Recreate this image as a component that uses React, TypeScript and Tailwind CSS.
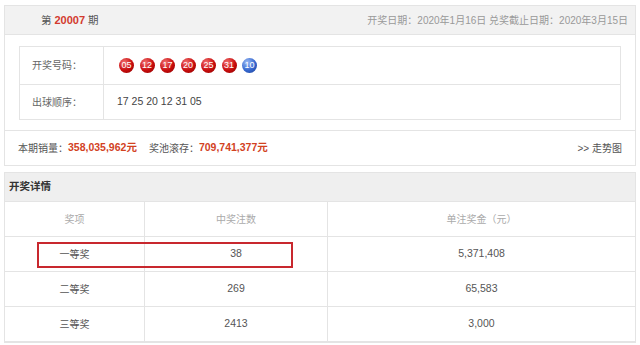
import React from 'react'

const redBalls = ['05', '12', '17', '20', '25', '31']
const blueBalls = ['10']

const prizes = [
  { name: '一等奖', count: '38', amount: '5,371,408' },
  { name: '二等奖', count: '269', amount: '65,583' },
  { name: '三等奖', count: '2413', amount: '3,000' },
]

const Ball = ({ num, blue }: { num: string; blue?: boolean }) => (
  <span
    className={`flex h-[15px] w-[15px] items-center justify-center rounded-full text-[9px] leading-none text-white ${
      blue
        ? 'bg-[radial-gradient(circle_at_35%_30%,#9dbcf5,#3567cf_55%,#1d3f92)]'
        : 'bg-[radial-gradient(circle_at_35%_30%,#f27070,#c80c0c_55%,#860000)]'
    }`}
  >
    {num}
  </span>
)

export default function App() {
  return (
    <div className="h-[345px] w-[640px] overflow-hidden bg-white px-[4px] pt-[5px] font-['Liberation_Sans','Noto_Sans_CJK_SC',sans-serif] text-[10px] text-[#555]">
      {/* Draw info */}
      <div className="border border-[#e4e4e4]">
        <div className="flex h-[29px] items-center justify-between border-b border-[#e4e4e4] bg-[#f2f2f2] pl-[36px] pr-[7px]">
          <div className="text-[10.5px] text-[#555]">
            第 <span className="text-[11px] font-bold text-[#d23a2e]">20007</span> 期
          </div>
          <div className="text-[#999]">开奖日期：2020年1月16日 兑奖截止日期：2020年3月15日</div>
        </div>

        <div className="px-[14px] pb-[10px] pt-[11px]">
          <div className="border border-[#e4e4e4]">
            <div className="flex h-[38px] border-b border-[#e4e4e4]">
              <div className="flex w-[84px] items-center border-r border-[#e4e4e4] pl-[12px] text-[#666]">开奖号码：</div>
              <div className="flex items-center gap-[5.5px] pl-[15px]">
                {redBalls.map((n) => (
                  <Ball key={n} num={n} />
                ))}
                {blueBalls.map((n) => (
                  <Ball key={n} num={n} blue />
                ))}
              </div>
            </div>
            <div className="flex h-[34px]">
              <div className="flex w-[84px] items-center border-r border-[#e4e4e4] pl-[12px] text-[#666]">出球顺序：</div>
              <div className="flex items-center pl-[13px] text-[10.5px] text-[#444]">17 25 20 12 31 05</div>
            </div>
          </div>
        </div>

        <div className="flex h-[35px] items-center justify-between border-t border-[#e4e4e4] pl-[13px] pr-[13px]">
          <div className="flex items-center">
            <span>本期销量：</span>
            <span className="text-[10.5px] font-bold text-[#d2421f]">358,035,962元</span>
            <span className="ml-[12px]">奖池滚存：</span>
            <span className="text-[10.5px] font-bold text-[#d2421f]">709,741,377元</span>
          </div>
          <div className="text-[#555]">&gt;&gt; 走势图</div>
        </div>
      </div>

      {/* Prize details */}
      <div className="mt-[6px] border border-[#e4e4e4]">
        <div className="flex h-[29px] items-center border-b border-[#e4e4e4] bg-[#efefef] pl-[4px] text-[10.5px] font-bold text-[#333]">
          开奖详情
        </div>
        <div className="grid grid-cols-[140px_183px_1fr] text-center">
          <div className="flex h-[35px] items-center justify-center border-b border-r border-[#e4e4e4] text-[#aaa]">奖项</div>
          <div className="flex h-[35px] items-center justify-center border-b border-r border-[#e4e4e4] text-[#aaa]">中奖注数</div>
          <div className="flex h-[35px] items-center justify-center border-b border-[#e4e4e4] text-[#aaa]">单注奖金（元）</div>
          {prizes.map((p, i) => (
            <React.Fragment key={p.name}>
              <div className="relative flex h-[35px] items-center justify-center border-b border-r border-[#e4e4e4]">
                {i === 0 && (
                  <div className="pointer-events-none absolute left-[32px] top-[5px] h-[26px] w-[256px] border-2 border-[#c8282e]" />
                )}
                {p.name}
              </div>
              <div className="flex h-[35px] items-center justify-center border-b border-r border-[#e4e4e4] text-[10.5px]">{p.count}</div>
              <div className="flex h-[35px] items-center justify-center border-b border-[#e4e4e4] text-[10.5px]">{p.amount}</div>
            </React.Fragment>
          ))}
        </div>
      </div>
    </div>
  )
}
